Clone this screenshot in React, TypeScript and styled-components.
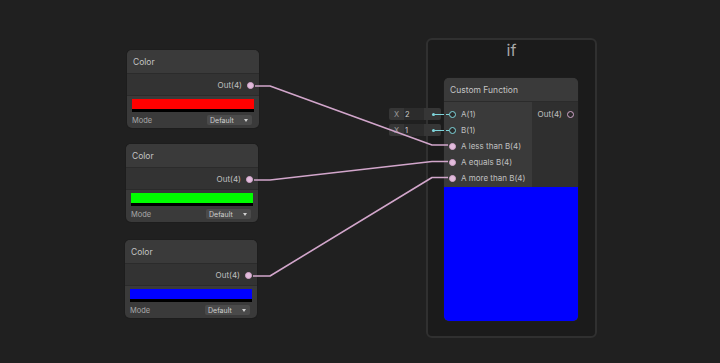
import styled, { createGlobalStyle } from 'styled-components';

const GlobalStyle = createGlobalStyle`
  html, body {
    margin: 0;
    padding: 0;
    background: #202020;
  }
  body {
    font-family: Inter, "Open Sans", sans-serif;
  }
`;

const PINK = '#d2a6cb';
const CYAN = '#7fd6dc';

const Canvas = styled.div`
  position: relative;
  width: 720px;
  height: 363px;
  overflow: hidden;
  background: #202020;
`;

const Group = styled.div<{ $x: number; $y: number; $w: number; $h: number }>`
  position: absolute;
  left: ${({ $x }) => $x}px;
  top: ${({ $y }) => $y}px;
  width: ${({ $w }) => $w}px;
  height: ${({ $h }) => $h}px;
  box-sizing: border-box;
  border: 2px solid #303030;
  border-radius: 6px;
  background: #1b1b1b;
  display: flex;
  flex-direction: column;
  align-items: center;
`;

const GroupTitle = styled.div`
  margin-top: 2px;
  font-size: 16px;
  line-height: 16px;
  color: #a8a8a8;
`;

const Node = styled.div<{ $x: number; $y: number; $w: number }>`
  position: absolute;
  left: ${({ $x }) => $x}px;
  top: ${({ $y }) => $y}px;
  width: ${({ $w }) => $w}px;
  background: #3a3a3a;
  border-radius: 5px;
  overflow: hidden;
  box-shadow: 0 0 0 1px #1d1d1d;
  display: flex;
  flex-direction: column;
`;

const NodeTitle = styled.div`
  height: 24px;
  box-sizing: border-box;
  padding: 0 6px;
  display: flex;
  align-items: center;
  font-size: 8.5px;
  color: #c4c4c4;
  background: #3a3a3a;
  border-bottom: 1px solid #2b2b2b;
`;

const OutRow = styled.div`
  height: 22px;
  box-sizing: border-box;
  display: flex;
  align-items: center;
  justify-content: flex-end;
  gap: 5px;
  padding: 1px 5px 0 0;
  background: #333333;
  border-bottom: 1px solid #2b2b2b;
`;

const PortLabel = styled.span`
  font-size: 8px;
  color: #c0c0c0;
  white-space: nowrap;
`;

const Port = styled.span<{ $color: string; $filled?: boolean }>`
  width: 7px;
  height: 7px;
  box-sizing: border-box;
  border-radius: 50%;
  flex: none;
  border: 1.5px solid ${({ $color }) => $color};
  background: ${({ $filled }) => ($filled ? '#e2bcdc' : '#2a2a2a')};
`;

const NodeBody = styled.div`
  padding: 3px 5px 2px;
  display: flex;
  flex-direction: column;
`;

const Swatch = styled.div<{ $color: string }>`
  height: 10px;
  background: ${({ $color }) => $color};
  border-bottom: 3px solid #000;
`;

const ModeRow = styled.div`
  margin-top: 2px;
  height: 12px;
  display: flex;
  align-items: center;
  justify-content: space-between;
`;

const ModeLabel = styled.span`
  font-size: 7.5px;
  color: #a8a8a8;
`;

const Dropdown = styled.div`
  width: 45px;
  height: 10px;
  box-sizing: border-box;
  margin-right: 2px;
  padding: 0 4px 0 3px;
  border-radius: 2px;
  background: #4a4a4a;
  display: flex;
  align-items: center;
  justify-content: space-between;
  font-size: 7px;
  color: #cfcfcf;

  &::after {
    content: '';
    border-left: 2.5px solid transparent;
    border-right: 2.5px solid transparent;
    border-top: 3px solid #cfcfcf;
  }
`;

const FnBody = styled.div`
  display: flex;
`;

const Inputs = styled.div`
  width: 88px;
  padding: 4px 0 1px;
  background: #3a3a3a;
  display: flex;
  flex-direction: column;
`;

const Outputs = styled.div`
  flex: 1;
  padding-top: 4px;
  background: #2f2f2f;
`;

const InputRow = styled.div`
  height: 16px;
  display: flex;
  align-items: center;
  gap: 5px;
  padding-left: 5px;
`;

const OutputRow = styled.div`
  height: 16px;
  display: flex;
  align-items: center;
  justify-content: flex-end;
  gap: 5px;
  padding-right: 4px;
`;

const Preview = styled.div<{ $color: string }>`
  height: 134px;
  background: ${({ $color }) => $color};
  border-radius: 0 0 4px 4px;
`;

const InlineField = styled.div<{ $x: number; $y: number }>`
  position: absolute;
  left: ${({ $x }) => $x}px;
  top: ${({ $y }) => $y}px;
  display: flex;
  align-items: center;
`;

const FieldBox = styled.div`
  width: 52px;
  height: 12px;
  display: flex;
  background: #363636;
  border-radius: 2px;
  overflow: hidden;
`;

const FieldAxis = styled.span`
  width: 15px;
  display: flex;
  align-items: center;
  justify-content: center;
  font-size: 7.5px;
  color: #9a9a9a;
`;

const FieldValue = styled.span`
  width: 20px;
  display: flex;
  align-items: center;
  padding-left: 1px;
  box-sizing: border-box;
  background: #2c2c2c;
  font-size: 7.5px;
  color: #cdcdcd;
`;

const FieldLink = styled.span`
  flex: 1;
  display: flex;
  align-items: center;
  padding-left: 8px;
`;

const LinkDot = styled.span`
  width: 3px;
  height: 3px;
  border-radius: 50%;
  background: ${CYAN};
  flex: none;
`;

const Dashes = styled.span<{ $w?: number }>`
  height: 0;
  border-top: 1px dashed ${CYAN};
  ${({ $w }) => ($w ? `width: ${$w}px;` : 'flex: 1;')}
`;

const Wires = styled.svg`
  position: absolute;
  left: 0;
  top: 0;
  pointer-events: none;
`;

const colorNodes = [
  { x: 127, y: 50, color: '#ff0000' },
  { x: 126, y: 144, color: '#00ff00' },
  { x: 125, y: 240, color: '#0000ff' },
];

const fnInputs = [
  { label: 'A(1)', linked: false },
  { label: 'B(1)', linked: false },
  { label: 'A less than B(4)', linked: true },
  { label: 'A equals B(4)', linked: true },
  { label: 'A more than B(4)', linked: true },
];

const wires = [
  'M255 86 H270 L432 145 H448',
  'M254 180 H270 L432 161.5 H448',
  'M253 276 H270 L432 177.5 H448',
];

function ColorNode({ x, y, color }: { x: number; y: number; color: string }) {
  return (
    <Node $x={x} $y={y} $w={132}>
      <NodeTitle>Color</NodeTitle>
      <OutRow>
        <PortLabel>Out(4)</PortLabel>
        <Port $color={PINK} $filled />
      </OutRow>
      <NodeBody>
        <Swatch $color={color} />
        <ModeRow>
          <ModeLabel>Mode</ModeLabel>
          <Dropdown>Default</Dropdown>
        </ModeRow>
      </NodeBody>
    </Node>
  );
}

function ValueField({ x, y, value }: { x: number; y: number; value: string }) {
  return (
    <InlineField $x={x} $y={y}>
      <FieldBox>
        <FieldAxis>X</FieldAxis>
        <FieldValue>{value}</FieldValue>
        <FieldLink>
          <LinkDot />
          <Dashes />
        </FieldLink>
      </FieldBox>
      <Dashes $w={8} />
    </InlineField>
  );
}

export default function App() {
  return (
    <>
      <GlobalStyle />
      <Canvas>
        <Group $x={426} $y={38} $w={171} $h={300}>
          <GroupTitle>if</GroupTitle>
        </Group>

        {colorNodes.map((n) => (
          <ColorNode key={n.y} {...n} />
        ))}

        <Node $x={444} $y={78} $w={134}>
          <NodeTitle>Custom Function</NodeTitle>
          <FnBody>
            <Inputs>
              {fnInputs.map((p) => (
                <InputRow key={p.label}>
                  <Port $color={p.linked ? PINK : CYAN} $filled={p.linked} />
                  <PortLabel>{p.label}</PortLabel>
                </InputRow>
              ))}
            </Inputs>
            <Outputs>
              <OutputRow>
                <PortLabel>Out(4)</PortLabel>
                <Port $color={PINK} />
              </OutputRow>
            </Outputs>
          </FnBody>
          <Preview $color="#0000ff" />
        </Node>

        <ValueField x={389} y={108} value="2" />
        <ValueField x={389} y={124} value="1" />

        <Wires width={720} height={363} viewBox="0 0 720 363">
          {wires.map((d) => (
            <path key={d} d={d} fill="none" stroke={PINK} strokeWidth={1.6} strokeLinejoin="round" />
          ))}
        </Wires>
      </Canvas>
    </>
  );
}
